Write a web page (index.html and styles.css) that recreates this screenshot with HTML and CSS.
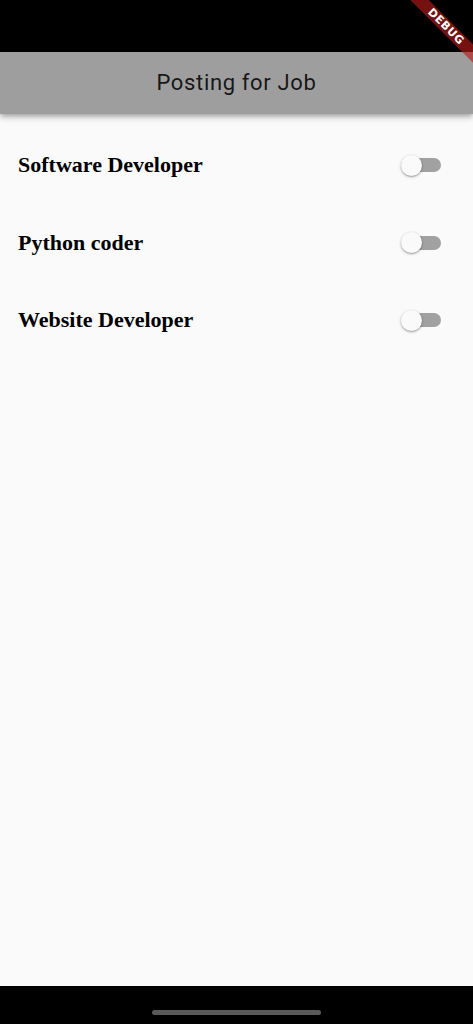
FILE: index.html
```html
<!DOCTYPE html>
<html>
<head>
<meta charset="utf-8">
<link rel="stylesheet" href="styles.css">
</head>
<body>
<div class="screen">
  <div class="status-bar"></div>
  <header class="app-bar"><h1 class="title">Posting for Job</h1></header>
  <main class="list">
    <div class="row"><span class="label">Software Developer</span><span class="switch"><span class="track"></span><span class="thumb"></span></span></div>
    <div class="row"><span class="label">Python coder</span><span class="switch"><span class="track"></span><span class="thumb"></span></span></div>
    <div class="row"><span class="label">Website Developer</span><span class="switch"><span class="track"></span><span class="thumb"></span></span></div>
  </main>
  <div class="nav-bar"><span class="handle"></span></div>
  <div class="banner">DEBUG</div>
</div>
</body>
</html>
```
FILE: styles.css
```css
html, body { margin: 0; padding: 0; }
body { background: #fafafa; overflow: hidden; }
.screen {
  position: relative;
  width: 473px;
  height: 1024px;
  display: flex;
  flex-direction: column;
  overflow: hidden;
  background: #fafafa;
}
.status-bar { height: 52px; background: #000; flex: none; }
.app-bar {
  height: 62px;
  flex: none;
  background: #9e9e9e;
  display: flex;
  align-items: center;
  justify-content: center;
  box-shadow: 0 2px 4px -1px rgba(0,0,0,0.2), 0 4px 5px 0 rgba(0,0,0,0.14), 0 1px 10px 0 rgba(0,0,0,0.12);
  position: relative;
  z-index: 1;
}
.title {
  margin: 0 0 1px 0;
  font-family: Roboto, "Liberation Sans", sans-serif;
  font-weight: 400;
  font-size: 22px;
  color: rgba(0,0,0,0.87);
  letter-spacing: 0.65px;
}
.list { flex: 1; padding-top: 12.5px; }
.row {
  height: 77.5px;
  display: flex;
  align-items: center;
  justify-content: space-between;
  padding: 0 32px 0 18px;
}
.label {
  font-family: "Liberation Serif", "Times New Roman", serif;
  font-weight: 700;
  font-size: 22px;
  color: #000;
}
.switch { position: relative; width: 40px; height: 22px; }
.track {
  position: absolute;
  left: 6px; top: 4px;
  width: 34px; height: 14px;
  border-radius: 7px;
  background: #a1a1a1;
}
.thumb {
  position: absolute;
  left: 0; top: 0.5px;
  width: 21px; height: 21px;
  border-radius: 50%;
  background: #fafafa;
  box-shadow: 0 1px 3px rgba(0,0,0,0.3), 0 1px 1px rgba(0,0,0,0.14);
}
.nav-bar {
  height: 38px;
  flex: none;
  background: #000;
  display: flex;
  justify-content: center;
  align-items: flex-start;
}
.handle {
  margin-top: 24px;
  width: 169px; height: 5px;
  border-radius: 3px;
  background: #5a5a5a;
}
.banner {
  position: absolute;
  left: 386px; top: 19.5px;
  width: 120px; height: 13px;
  transform: rotate(45deg);
  background: rgba(183,28,28,0.63);
  color: #fff;
  font-family: "DejaVu Sans", "Liberation Sans", sans-serif;
  font-weight: 700;
  font-size: 11px;
  line-height: 13px;
  text-align: center;
  letter-spacing: 0.6px;
  z-index: 2;
}
```
